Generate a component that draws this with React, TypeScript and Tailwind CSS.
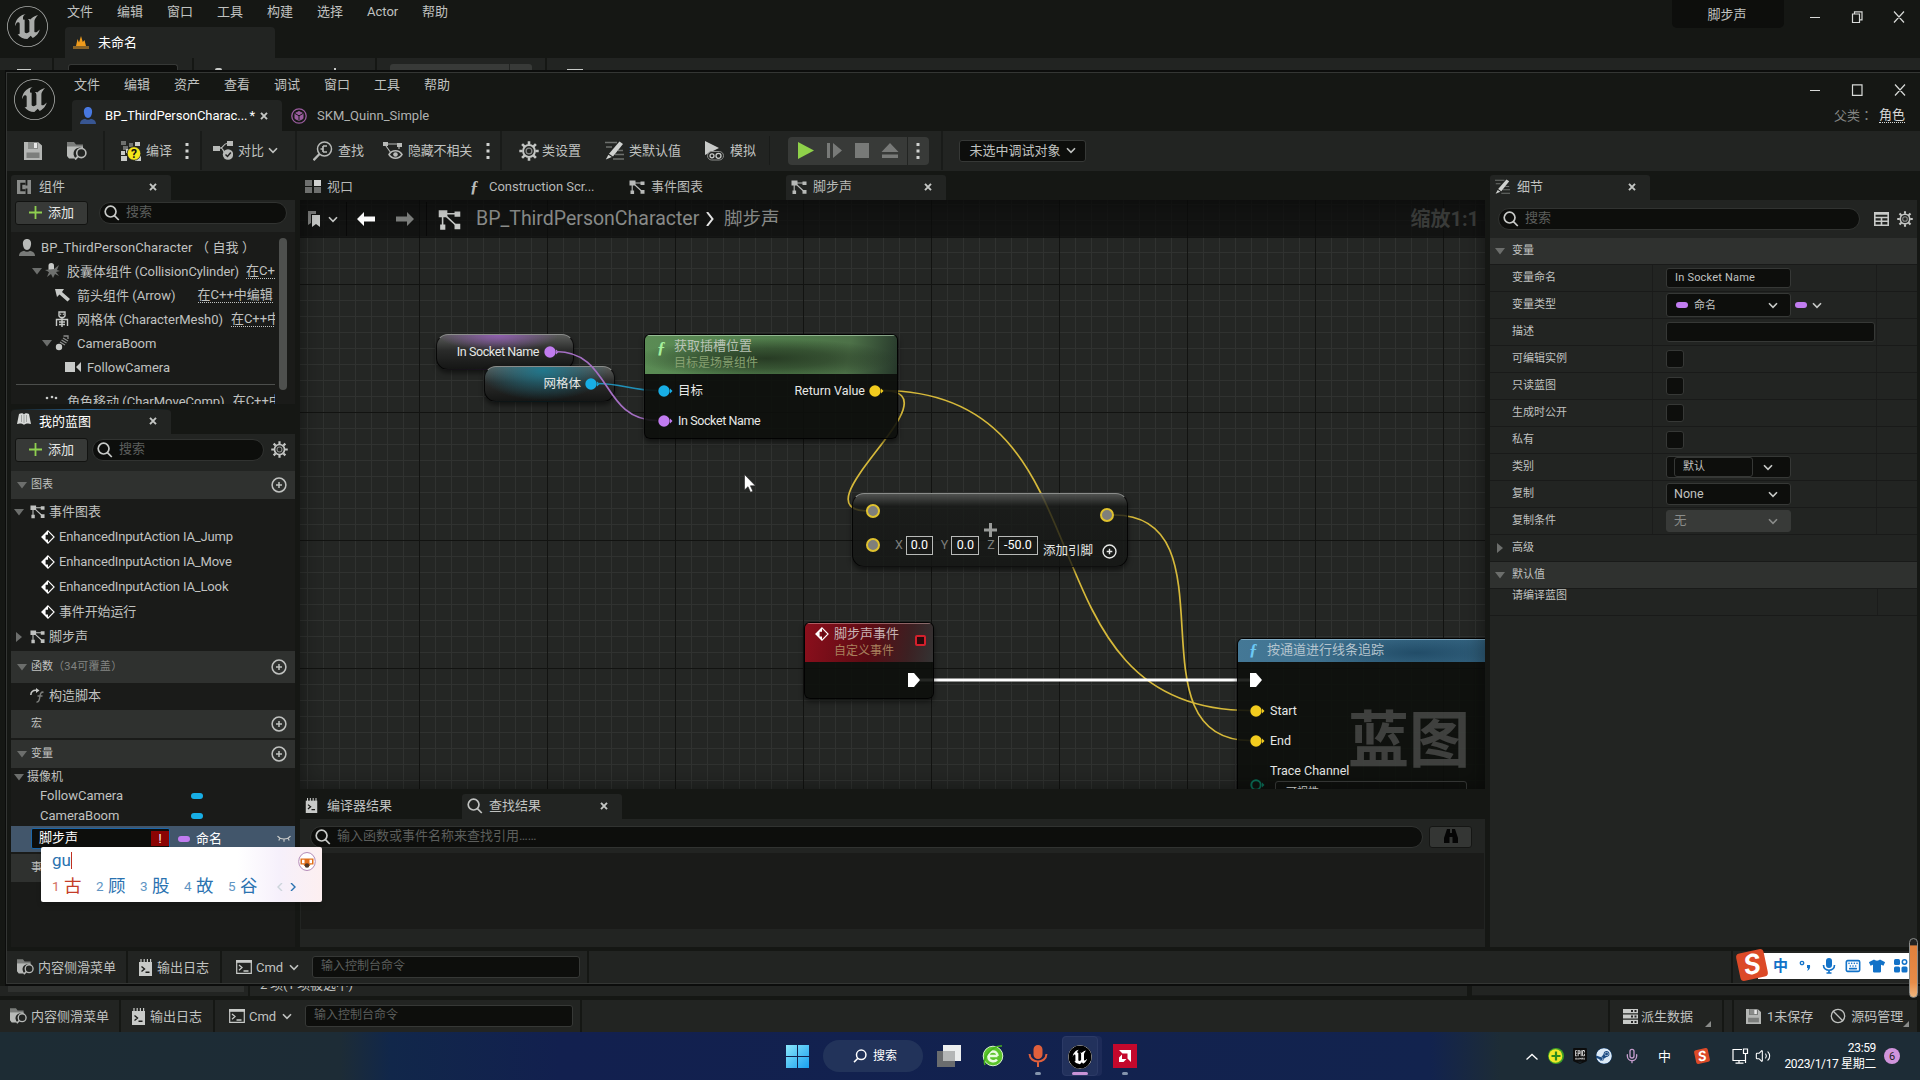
import type { ReactNode } from 'react';
import clsx from 'clsx';
import { SiEpicgames, SiUnrealengine } from 'react-icons/si';
import { FaSteam, FaTshirt } from 'react-icons/fa';
import { Ban, Keyboard, Mic, Volume2 } from 'lucide-react';

interface IIcon {
  className?: string;
}

interface ITreeRow {
  pad: string;
  arrow?: boolean;
  icon: ReactNode;
  label: string;
  link?: string;
  linkGap?: string;
  tracking?: string;
}

const Chevron = ({ className }: IIcon) => (
  <svg viewBox="0 0 10 7" fill="none" stroke="currentColor" strokeWidth="1.6" className={clsx('h-[7px] w-[10px] shrink-0', className)}>
    <path d="M1 1.2 5 5.4 9 1.2" />
  </svg>
);

const SearchIcon = ({ className }: IIcon) => (
  <svg viewBox="0 0 16 16" fill="none" stroke="currentColor" strokeWidth="1.7" className={clsx('size-4 shrink-0', className)}>
    <circle cx="6.6" cy="6.6" r="5.4" />
    <path d="m10.4 10.6 4.4 4.4" />
  </svg>
);

const CloseX = ({ className }: IIcon) => (
  <svg viewBox="0 0 8 8" stroke="#c4c6c4" strokeWidth="1.9" className={clsx('size-2 shrink-0', className)}>
    <path d="m1 .8 6 6.4M7 .8 1 7.2" />
  </svg>
);

const Gear = ({ className }: IIcon) => (
  <svg viewBox="0 0 20 20" fill="none" stroke="#c4c6c4" className={clsx('size-5 shrink-0', className)}>
    <circle cx="10" cy="10" r="5.9" strokeWidth="2" />
    <circle cx="10" cy="10" r="2.9" stroke="#8a8c8a" strokeWidth="1.3" />
    <path d="M10 .3v3.2M10 16.500v3.200M.3 10h3.200M16.500 10h3.200M3.100 3.100l2.300 2.300M14.600 14.600l2.300 2.300M16.900 3.100l-2.300 2.300M5.400 14.600l-2.300 2.300" strokeWidth="2.6" />
  </svg>
);

const Triangle = ({ right, className }: { right?: boolean; className?: string }) => (
  <svg viewBox="0 0 10 10" fill="#6c6e6c" className={clsx('size-[10px] shrink-0', className)}>
    {right ? <path d="M2 0v10l6-5z" /> : <path d="M0 2h10L5 8.4z" />}
  </svg>
);

const PlusCircle = ({ className }: IIcon) => (
  <svg viewBox="0 0 16 16" fill="none" stroke="currentColor" strokeWidth="1.5" className={clsx('size-4 shrink-0', className)}>
    <circle cx="8" cy="8" r="6.9" />
    <path d="M8 5v6M5 8h6" />
  </svg>
);

const GraphIcon = ({ className }: IIcon) => (
  <svg viewBox="0 0 16 16" fill="currentColor" className={clsx('size-4 shrink-0', className)}>
    <path d="M.5 1.5h6v5h-6zM11.5 2.5h4v3.6h-4zM1.5 11.5h3.6v3.6H1.5zM11.5 11h4v3.8h-4z" />
    <path d="M6 4h6M3.2 6v6M6 6l6.5 6" stroke="currentColor" strokeWidth="1.1" />
  </svg>
);

const DiamondIcon = ({ className }: IIcon) => (
  <svg viewBox="0 0 14 14" className={clsx('size-[14px] shrink-0', className)}>
    <path d="M7 .9 13.1 7 7 13.1.9 7z" fill="none" stroke="#fff" strokeWidth="1.1" />
    <path d="M7 .5.5 7 7 13.5V9.6H4.6V4.8H7z" fill="#fff" />
    <path d="M7.2 4 10.4 7 7.2 10z" fill="currentColor" />
  </svg>
);

const SaveIcon = ({ className }: IIcon) => (
  <svg viewBox="0 0 18 18" className={clsx('size-[18px] shrink-0', className)}>
    <path d="M0 0h4v7h10V0l4 3.500V18H0z" fill="#b4b6b4" />
    <path d="M4 0h10v7H4z" fill="#8a8c8a" />
    <path d="M10 1h3v5h-3z" fill="#e8e8e8" />
    <path d="M2.500 10.500h13V16h-13z" fill="#7c7e7c" />
  </svg>
);

const BrowseIcon = ({ className }: IIcon) => (
  <svg viewBox="0 0 20 18" className={clsx('h-[18px] w-5 shrink-0', className)}>
    <path d="M0 0h7l2 2.500h7V5H0z" fill="#7a7c7a" />
    <path d="M0 4.500h16v2.200a6 6 0 0 0-7 9.800H2L0 14z" fill="#b8bab8" />
    <circle cx="14.300" cy="11" r="4.600" fill="none" stroke="#b8bab8" strokeWidth="1.600" />
    <path d="m11 14.300-3 3.200" stroke="#b8bab8" strokeWidth="1.900" />
  </svg>
);

const LogIcon = ({ className }: IIcon) => (
  <svg viewBox="0 0 13 17" className={clsx('h-[17px] w-[13px] shrink-0', className)}>
    <path d="M0 3h13v14H0z" fill="#c8cac8" />
    <path d="M2 0v4M5.200 0v4M8.400 0v4M11.600 0v4" stroke="#c8cac8" strokeWidth="1.200" />
    <path d="m2.500 7.500 3 2.500-3 2.500M6.500 13.200h4" fill="none" stroke="#1a1b19" strokeWidth="1.400" />
  </svg>
);

const CmdIcon = () => (
  <svg viewBox="0 0 16 14" fill="none" stroke="#c8cac8" className="h-[14px] w-4 shrink-0">
    <path d="M.7.7h14.600v12.600H.7z" strokeWidth="1.200" />
    <path d="M0 1.500h16" strokeWidth="2.600" />
    <path d="m3 5 3 2.600L3 10.200M7.500 11h5" strokeWidth="1.300" />
  </svg>
);

const PencilLines = ({ className }: IIcon) => (
  <svg viewBox="0 0 19 19" className={clsx('size-[19px] shrink-0', className)}>
    <path d="M0 1.500h12M1 6h6M10 13.500h9M8 18h11M13 9.500h5" stroke="#6e706e" strokeWidth="1.300" />
    <path d="M14.500.5 18 3 8 15.500 4 12.800z" fill="#d0d2d0" />
    <path d="M3.400 13.800 6.800 16 .8 18.600z" fill="#d0d2d0" />
  </svg>
);

const PersonIcon = ({ className }: IIcon) => (
  <svg viewBox="0 0 16 17" fill="currentColor" className={clsx('h-[17px] w-4 shrink-0', className)}>
    <path d="M8 0c3 0 4.300 2.200 4.100 5-.2 3-1.600 6-4.100 6S4.100 8 3.900 5C3.700 2.200 5 0 8 0z" />
    <path d="M0 17c0-3 1.800-4.600 5-5.200 1.500 1.300 4.500 1.300 6 0 3.200.6 5 2.200 5 5.200z" opacity=".6" />
  </svg>
);

const Dots = ({ className }: IIcon) => (
  <svg viewBox="0 0 4 16" fill="#d0d2d0" className={clsx('h-4 w-1 shrink-0', className)}>
    <path d="M.5 0h3v3h-3zM.5 6.500h3v3h-3zM.5 13h3v3h-3z" />
  </svg>
);

const UnrealLogo = () => <SiUnrealengine className="size-[41px] shrink-0 text-[#a9aba9]" />;

const Menu = ({ items, className }: { items: string[]; className?: string }) => (
  <div className={clsx('flex items-center text-[13px] leading-none', className)}>
    {items.map((item) => (
      <span key={item} className={clsx('whitespace-nowrap', item === 'Actor' ? 'w-[55px]' : 'w-[50px]')}>
        {item}
      </span>
    ))}
  </div>
);

const SearchBox = ({ className, text = '搜索' }: { className?: string; text?: string }) => (
  <div className={clsx('flex h-[22px] shrink-0 items-center gap-[6px] rounded-full border border-[#313331] bg-[#0d0e0c] pl-1 text-[13px] leading-none text-[#5c5e5c]', className)}>
    <SearchIcon className="text-[#c8cac8]" />
    <span className="pb-[3px]">{text}</span>
  </div>
);

const AddButton = () => (
  <button className="flex h-6 w-[73px] shrink-0 items-center justify-center gap-1.5 rounded-[3px] border border-[#121311] bg-[#373937] pb-px text-[13px] leading-none text-[#e4e6e4]">
    <svg viewBox="0 0 13 13" className="size-[13px]" stroke="#8fd050" strokeWidth="1.8">
      <path d="M6.500 0v13M0 6.500h13" />
    </svg>
    添加
  </button>
);

const PanelTab = ({ icon, label, active, className }: { icon: ReactNode; label: string; active?: boolean; className?: string }) => (
  <div className={clsx('flex h-[25px] w-40 shrink-0 items-center rounded-t-[3px] pb-0.5 pl-[6px] text-[13px] leading-none', active && 'bg-[#222422]', className)}>
    <span className="flex w-[22px] shrink-0 items-center">{icon}</span>
    <span className="flex-1 whitespace-nowrap">{label}</span>
    {active && <CloseX className="mr-[14px]" />}
  </div>
);

const Func = ({ className }: IIcon) => <span className={clsx("font-['Liberation_Serif'] text-[17px] leading-none font-bold italic", className)}>ƒ</span>;

const ComponentRow = ({ pad, arrow, icon, label, link, linkGap, tracking }: ITreeRow) => (
  <div className={clsx('flex h-6 items-center whitespace-nowrap', pad)}>
    {arrow && <Triangle className="mr-[3px]" />}
    <span className="flex w-[22px] shrink-0 items-center">{icon}</span>
    <span className={tracking}>{label}</span>
    {link && <span className={clsx('border-b border-dotted border-[#c0c2c0] pb-px', linkGap)}>{link}</span>}
  </div>
);

const Section = ({ label, extra, arrow = true, className }: { label: string; extra?: string; arrow?: boolean; className?: string }) => (
  <div className={clsx('flex shrink-0 items-center bg-[#2f312f] pr-2 pl-[6px] text-[11px] leading-none', className)}>
    <span className="w-[14px]">{arrow && <Triangle />}</span>
    <span className="pb-0.5">{label}</span>
    {extra && <span className="pb-0.5 tracking-[0.3px] text-[#828482]">{extra}</span>}
    <PlusCircle className="ml-auto text-[#c0c2c0]" />
  </div>
);

const ComponentsPanel = () => (
  <div className="flex h-[229px] shrink-0 flex-col">
    <PanelTab
      active
      label="组件"
      icon={
        <svg viewBox="0 0 14 14" className="size-[14px]">
          <path d="M0 0h14v14H0z" fill="#8a8c8a" />
          <path d="M8.500 3.800H4.300v6.400h4.200" fill="none" stroke="#1b1c1a" strokeWidth="2" />
          <path d="M9.500 0v5.500M9.500 8.500V14" stroke="#1b1c1a" strokeWidth="1.800" />
        </svg>
      }
    />
    <div className="flex h-8 shrink-0 items-start bg-[#222422] pt-px pl-1">
      <AddButton />
      <SearchBox className="mt-px ml-[11px] w-[188px]" />
    </div>
    <div className="flex min-h-0 flex-1 overflow-hidden bg-[#1a1b19] text-[13px] leading-none">
      <div className="w-[264px] overflow-hidden pt-[3px]">
        <ComponentRow pad="pl-2" icon={<PersonIcon className="text-[#b8bab8]" />} label="BP_ThirdPersonCharacter （ 自我 ）" tracking="tracking-[0.120px]" />
        <ComponentRow
          pad="pl-[21px]"
          arrow
          icon={
            <svg viewBox="0 0 16 16" className="size-4">
              <rect x="3.500" y="0" width="5.500" height="10" rx="2.700" fill="#c8cac8" />
              <path d="m9 6 5-4-2 5 3 1-4 1 3 4-4-2-2 4-2-4-4 3 2-5-4-2 4-.5z" fill="#6e706e" />
            </svg>
          }
          label="胶囊体组件 (CollisionCylinder)"
          link="在C++中编辑"
          linkGap="ml-[7px]"
          tracking="tracking-[-0.070px]"
        />
        <ComponentRow
          pad="pl-[44px]"
          icon={
            <svg viewBox="0 0 16 14" className="h-[14px] w-4" fill="#c8cac8">
              <path d="M0 1h9L7 4l8 7-2.500 2.500-8-7L2 9z" />
            </svg>
          }
          label="箭头组件 (Arrow)"
          link="在C++中编辑"
          linkGap="ml-[22px]"
        />
        <ComponentRow
          pad="pl-[44px]"
          icon={
            <svg viewBox="0 0 14 16" className="h-4 w-[14px]" fill="none" stroke="#c8cac8" strokeWidth="1.400">
              <path d="M4 1h6v4l-1.500 1.500h-3L4 5zM7 7v9M1.500 15V8.500h11V15M4 11h6M4 13.500h6" />
              <path d="M5.200 3.200h1M7.800 3.200h1" />
            </svg>
          }
          label="网格体 (CharacterMesh0)"
          link="在C++中编辑"
          linkGap="ml-[8px]"
          tracking="tracking-[-0.050px]"
        />
        <ComponentRow
          pad="pl-[31px]"
          arrow
          icon={
            <svg viewBox="0 0 14 16" className="h-4 w-[14px]" fill="none" stroke="#8a8c8a" strokeWidth="1.300">
              <circle cx="4" cy="12" r="3.200" fill="#c8cac8" stroke="none" />
              <path d="m5 7 5 3M6.500 5l5 3M8 3l5 3M8.500 1h4.500v3" />
            </svg>
          }
          label="CameraBoom"
        />
        <ComponentRow
          pad="pl-[54px]"
          icon={
            <svg viewBox="0 0 16 10" className="h-[10px] w-4" fill="#c8cac8">
              <path d="M0 0h10v10H0zM16 0v10l-5-5z" />
            </svg>
          }
          label="FollowCamera"
        />
        <div className="mt-[5px] ml-[5px] h-px bg-[#4c4e4c]" />
        <ComponentRow
          pad="pl-[34px] mt-[4px]"
          icon={
            <svg viewBox="0 0 14 8" className="mb-1 h-2 w-[14px]" fill="#c8cac8">
              <circle cx="2" cy="3" r="1.300" />
              <circle cx="7" cy="2" r="1.300" />
              <circle cx="11" cy="3" r="1.300" />
            </svg>
          }
          label="角色移动 (CharMoveComp)"
          link="在C++中编辑"
          linkGap="ml-2"
        />
      </div>
      <div className="mt-[6px] ml-1 h-[152px] w-2 rounded-full bg-[#4e504e]" />
    </div>
  </div>
);

const EVENTS = ['EnhancedInputAction IA_Jump', 'EnhancedInputAction IA_Move', 'EnhancedInputAction IA_Look', '事件开始运行'];

const BlueprintPanel = () => (
  <div className="mt-[5px] flex min-h-0 flex-1 flex-col">
    <div className="h-px w-40 bg-gradient-to-r from-transparent via-[#2d6ca0] to-transparent" />
    <PanelTab
      active
      label="我的蓝图"
      className="!h-6 text-white"
      icon={
        <svg viewBox="0 0 14 13" className="mb-1 h-[13px] w-[14px]" fill="#d8dad8">
          <path d="M2 1c2-1 4-1 5 .5C8 0 10 0 12 1l2 10c-3-1-5-.5-7 .8C5 10.500 3 10 0 11z" />
          <path d="M7 2v8M4.500 2v7M9.500 2v7" stroke="#8a8c8a" strokeWidth=".7" />
        </svg>
      }
    />
    <div className="flex h-[37px] shrink-0 items-start bg-[#222422] pt-[4px] pl-1">
      <AddButton />
      <SearchBox className="mt-px ml-1 w-[172px]" />
      <Gear className="mt-[3px] ml-[7px] !size-[17px]" />
    </div>
    <div className="flex min-h-0 flex-1 flex-col bg-[#1a1b19] text-[13px] leading-none">
      <Section label="图表" className="h-7" />
      <div className="flex h-[25px] shrink-0 items-center pl-[3px] text-[#c0c2c0]">
        <Triangle className="mr-[6px]" />
        <GraphIcon className="mr-1 !size-[15px]" />
        事件图表
      </div>
      {EVENTS.map((name) => (
        <div key={name} className="flex h-[25px] shrink-0 items-center gap-1 pl-[30px] tracking-[-0.150px]">
          <DiamondIcon className="text-[#1a1b19]" />
          {name}
        </div>
      ))}
      <div className="flex h-[27px] shrink-0 items-center pb-0.5 pl-[3px]">
        <Triangle right className="mr-[6px]" />
        <GraphIcon className="mr-1 !size-[15px]" />
        脚步声
      </div>
      <Section label="函数" extra="（34可覆盖）" className="h-8" />
      <div className="flex h-[27px] shrink-0 items-center pb-0.5 pl-[19px]">
        <svg viewBox="0 0 15 16" className="mr-1 h-4 w-[15px]" fill="none">
          <path d="M.8 7C1 3.500 3 2 6.500 2.200" stroke="#c8cac8" strokeWidth="1.500" />
          <path d="m6 0 3.500 2.400L6 5z" fill="#c8cac8" />
          <path d="M13.500 4.500c-2-1.200-3 .5-3.500 3.500-.6 4-1.200 6.500-3.500 6M7.500 8h5" stroke="#7c7e7c" strokeWidth="1.500" />
        </svg>
        构造脚本
      </div>
      <Section label="宏" arrow={false} className="h-7" />
      <Section label="变量" className="mt-0.5 h-7" />
      <div className="flex h-[18px] shrink-0 items-center pl-[3px] text-[12px]">
        <Triangle className="mr-[3px]" />
        摄像机
      </div>
      {['FollowCamera', 'CameraBoom'].map((name) => (
        <div key={name} className="flex h-5 shrink-0 items-center pb-px pl-[29px]">
          <span className="w-[151px]">{name}</span>
          <span className="h-[6px] w-3 rounded-full bg-[#18aee5]" />
        </div>
      ))}
      <div className="flex h-[26px] shrink-0 items-center bg-[#42566b] pr-1 pb-px pl-5 text-white">
        <div className="flex h-[21px] w-[139px] items-center rounded-[2px] border border-[#1b66a8] bg-[#0d0e0c] pl-[7px]">
          <span className="pb-0.5">脚步声</span>
          <span className="ml-auto flex h-[15px] w-[18px] items-center justify-center bg-[#8b0404] text-[12px]">!</span>
        </div>
        <span className="ml-2 h-[6px] w-3 rounded-full bg-[#c17cf0]" />
        <span className="ml-[6px]">命名</span>
        <svg viewBox="0 0 14 7" className="ml-auto h-[7px] w-[14px]" fill="none" stroke="#c8cac8" strokeWidth="1.200">
          <path d="M.5 1c3 4 10 4 13 0M3 3 1.800 5.500M7 4v2.800M11 3l1.200 2.500" />
        </svg>
      </div>
      <div className="mt-0.5 flex h-7 shrink-0 items-center bg-[#2f312f] pb-0.5 pl-5 text-[11px]">事件分发器</div>
    </div>
  </div>
);

const Pin = ({ color, className }: { color: string; className?: string }) => (
  <svg viewBox="0 0 15 12" fill={color} className={clsx('h-3 w-[15px] shrink-0', className)}>
    <circle cx="6" cy="6" r="5.700" />
    <path d="M12 3.500 14.500 6 12 8.500z" />
  </svg>
);

const HollowPin = ({ className }: IIcon) => <span className={clsx('size-[14px] rounded-full border-2 border-[#e0c22e] bg-[#7f7f7b]', className)} />;

const ExecPin = ({ className }: IIcon) => (
  <svg viewBox="0 0 12 14" fill="#fff" className={clsx('h-[14px] w-3 shrink-0', className)}>
    <path d="M0 0h6l6 7-6 7H0z" />
  </svg>
);

const VectorField = ({ axis, value, className }: { axis: string; value: string; className?: string }) => (
  <span className="flex items-center gap-[3px] text-[#7c7e7c]">
    {axis}
    <span className={clsx('flex h-[19px] items-center justify-center border border-[#b8bab8] text-white', className)}>{value}</span>
  </span>
);

const Wires = () => (
  <svg className="absolute inset-0" width="1185" height="589" viewBox="300 200 1185 589" fill="none" strokeWidth="1.700">
    <path d="M882 390.500C1119 390.500 1013 710.500 1250 710.500" stroke="#d6b93a" />
    <path d="M882 390.500C963 390.500 791 511 869 511" stroke="#d6b93a" />
    <path d="M1114 515C1237 515 1127 740.500 1250 740.500" stroke="#d6b93a" />
    <path d="M597 383.500C622 383.500 632 390.500 657 390.500" stroke="#2090b8" />
    <path d="M556 351.500C612 351.500 601 420.500 657 420.500" stroke="#a56fc4" />
    <path d="M915 680H1250" stroke="#fff" strokeWidth="3" />
  </svg>
);

const NODE = 'absolute overflow-hidden border border-black/80 shadow-[0_3px_5px_rgba(0,0,0,0.5)] text-[12.500px] leading-none text-[#e6e8e6] whitespace-nowrap';

const Graph = () => (
  <div className="relative h-[589px] overflow-hidden bg-[#242624]">
    <svg className="absolute inset-0" width="1185" height="589">
      <defs>
        <pattern id="minor" width="16" height="16" x="7" y="4" patternUnits="userSpaceOnUse">
          <path d="M.5 0v16M0 .5h16" stroke="#303230" />
        </pattern>
        <pattern id="major" width="128" height="128" x="119" y="84" patternUnits="userSpaceOnUse">
          <path d="M.5 0v128M0 .5h128" stroke="#121311" />
        </pattern>
      </defs>
      <rect width="1185" height="589" fill="url(#minor)" />
      <rect width="1185" height="589" fill="url(#major)" />
    </svg>

    <div className={clsx(NODE, 'top-[134px] left-[136px] flex h-9 w-[138px] items-center justify-end rounded-[12px] border-t-[#8a8c8a] bg-[radial-gradient(ellipse_60px_16px_at_45%_0%,rgba(150,95,185,0.9),transparent),linear-gradient(#5a5c5a,#2a2b2a_45%,#151615)] pr-[14px]')}>
      <span className="mr-[5px] tracking-[-0.400px]">In Socket Name</span>
      <Pin color="#c17cf0" />
    </div>
    <div className={clsx(NODE, 'top-[166px] left-[184px] flex h-9 w-[131px] items-center justify-end rounded-[12px] border-t-[#8a8c8a] bg-[radial-gradient(ellipse_65px_30px_at_45%_10%,rgba(25,125,150,0.85),transparent),linear-gradient(#5a5c5a,#2a2b2a_45%,#151615)] pr-[14px]')}>
      <span className="mr-1">网格体</span>
      <Pin color="#18aee5" />
    </div>
    <Wires />

    <div className={clsx(NODE, 'top-[134px] left-[344px] h-[105px] w-[254px] rounded-[6px] bg-[#0d100c]/90')}>
      <div className="flex h-[39px] bg-[radial-gradient(ellipse_130px_20px_at_48%_60%,rgba(29,43,26,0.8),rgba(29,43,26,0.5)_50%,transparent),linear-gradient(100deg,#5b8c55,#4f7a4a_60%,#4d7148_80%,#26372a)] pt-1 pl-3 shadow-[inset_0_1px_0_rgba(190,220,190,0.6)]">
        <Func className="w-[17px] text-[#a5f09c]" />
        <div className="flex flex-col gap-[5px] text-[#b9c4b6]">
          <span className="text-[13px]">获取插槽位置</span>
          <span className="text-[12px] text-[#86a070]">目标是场景组件</span>
        </div>
      </div>
      <div className="flex h-[34px] items-center pr-[13px] pl-[13px]">
        <Pin color="#18aee5" />
        <span className="ml-[5px]">目标</span>
        <span className="mr-1 ml-auto">Return Value</span>
        <Pin color="#f2cc1e" />
      </div>
      <div className="flex h-[26px] items-center pl-[13px]">
        <Pin color="#c17cf0" />
        <span className="ml-[5px] tracking-[-0.400px]">In Socket Name</span>
      </div>
    </div>

    <div className={clsx(NODE, 'top-[293px] left-[552px] h-[74px] w-[276px] rounded-[12px] border-t-[#8a8c8a] bg-[linear-gradient(rgba(85,87,85,0.9),rgba(24,26,24,0.800)_17%,rgba(20,22,20,0.800))]')}>
      <div className="flex h-[34px] items-center justify-between pr-[13px] pl-[13px]">
        <HollowPin />
        <HollowPin className="mt-2" />
      </div>
      <div className="flex h-[34px] items-center pr-[10px] pl-[13px]">
        <HollowPin />
        <div className="ml-[15px] flex gap-[8px]">
          <VectorField axis="X" value="0.0" className="w-[27px]" />
          <VectorField axis="Y" value="0.0" className="w-[28px]" />
          <VectorField axis="Z" value="-50.0" className="w-[40px]" />
        </div>
        <span className="mt-3 ml-auto">添加引脚</span>
        <PlusCircle className="mt-3 ml-[9px] !size-[15px]" />
      </div>
      <svg viewBox="0 0 13 14" className="absolute top-[29px] left-[131px] h-[14px] w-[13px]" stroke="#9a9c9a" strokeWidth="3">
        <path d="M6.500 0v14M0 7h13" />
      </svg>
    </div>

    <div className={clsx(NODE, 'top-[422px] left-[504px] h-[77px] w-[130px] rounded-[6px] bg-[#0d100c]/90')}>
      <div className="flex h-[39px] bg-[linear-gradient(100deg,#8c0f1c,#5c0c14_50%,#3c2022_80%,#333)] pt-1 pl-[10px] shadow-[inset_0_1px_0_rgba(220,170,170,0.5)]">
        <DiamondIcon className="text-[#5c0c14]" />
        <div className="ml-[5px] flex flex-col gap-[5px]">
          <span className="text-[13px] text-[#c8b4b4]">脚步声事件</span>
          <span className="text-[12px] text-[#a8805c]">自定义事件</span>
        </div>
        <span className="mt-[8px] ml-4 size-[11px] rounded-[2px] border-2 border-[#d4202c] bg-[#2a0a0c]" />
      </div>
      <ExecPin className="mt-[11px] ml-[103px]" />
    </div>

    <div className={clsx(NODE, 'top-[438px] left-[937px] h-[200px] w-[300px] rounded-[6px] bg-[#0d100c]/90')}>
      <div className="flex h-[23px] items-center bg-[radial-gradient(ellipse_110px_20px_at_60%_60%,rgba(28,69,96,0.8),transparent),linear-gradient(100deg,#447896,#33627e)] pb-[3px] pl-[11px] shadow-[inset_0_1px_0_rgba(170,205,225,0.6)]">
        <Func className="w-[18px] text-[#6cc8f4]" />
        <span className="text-[13px] text-[#b4c4ce]">按通道进行线条追踪</span>
      </div>
      <ExecPin className="mt-[11px] ml-3" />
      <div className="mt-[9px] flex h-[30px] items-center pl-3">
        <Pin color="#f2cc1e" />
        <span className="ml-[5px]">Start</span>
      </div>
      <div className="flex h-[30px] items-center pl-3">
        <Pin color="#f2cc1e" />
        <span className="ml-[5px]">End</span>
      </div>
      <div className="mt-[9px] pl-8">Trace Channel</div>
      <div className="flex items-start pl-3">
        <svg viewBox="0 0 15 12" className="mt-px h-3 w-[15px]">
          <circle cx="6" cy="6" r="4.700" fill="none" stroke="#0b6e57" strokeWidth="2" />
          <path d="M12 3.500 14.500 6 12 8.500z" fill="#0b6e57" />
        </svg>
        <div className="mt-[3px] ml-[10px] h-6 w-[192px] rounded-[3px] border border-[#3a3c3a] pt-[5px] pl-[10px] text-[11px]">可视性</div>
      </div>
    </div>
    <span className="absolute top-[511px] left-[1048px] text-[61px] leading-none font-bold text-white/20">蓝图</span>

    <div className="absolute inset-x-0 top-0 flex h-[38px] items-center bg-[#0c0d0c]/75 pl-2 text-[19.500px] leading-none text-[#8a8c8a]">
      <svg viewBox="0 0 12 16" className="h-4 w-3" fill="#c8cac8">
        <path d="M0 0h8v3H3v9l-3 2z" opacity=".6" />
        <path d="M4 4h8v12l-4-3-4 3z" />
      </svg>
      <Chevron className="ml-2 text-[#c8cac8]" />
      <span className="ml-[8px] h-[34px] w-px bg-black/50" />
      <svg viewBox="0 0 18 14" className="ml-[10px] h-[14px] w-[18px]" fill="#fff">
        <path d="M7 0v4.500h11v5H7V14L0 7z" />
      </svg>
      <svg viewBox="0 0 18 14" className="ml-[21px] h-[14px] w-[18px]" fill="#7c7e7c">
        <path d="M11 0v4.500H0v5h11V14l7-7z" />
      </svg>
      <span className="ml-[12px] h-[34px] w-px bg-black/50" />
      <GraphIcon className="ml-[11px] !size-[23px] text-[#c8cac8]" />
      <span className="ml-[15px] w-[221px] whitespace-nowrap">BP_ThirdPersonCharacter</span>
      <svg viewBox="0 0 8 14" className="ml-[9px] h-[14px] w-2" fill="none" stroke="#e8e8e8" strokeWidth="2">
        <path d="m1 0 5.500 7L1 14" />
      </svg>
      <span className="ml-[10px] text-[18.500px]">脚步声</span>
      <span className="mr-[6px] ml-auto text-[20px] font-bold text-[#3a3c3a]">缩放1:1</span>
    </div>
    <div className="pointer-events-none absolute inset-0 shadow-[inset_0_0_22px_rgba(0,0,0,0.450)]" />
    <svg viewBox="0 0 12 19" className="absolute top-[274px] left-[444px] h-[19px] w-3" fill="#fff" stroke="#222" strokeWidth=".6">
      <path d="M.5.5v15.500l3.500-3.300 2.500 5.600 2.400-1-2.500-5.500h5z" />
    </svg>
  </div>
);

const ResultsPanel = () => (
  <div className="flex min-h-0 flex-1 flex-col pt-[5px]">
    <div className="flex">
      <PanelTab className="mr-[2px] !pl-[5px]" icon={<LogIcon className="!h-[15px]" />} label="编译器结果" />
      <PanelTab active className="!pl-[5px]" icon={<SearchIcon />} label="查找结果" />
    </div>
    <div className="flex flex-1 flex-col bg-[#222422]">
      <div className="flex items-center pt-[7px] pl-[10px]">
        <SearchBox className="w-[1113px]" text="输入函数或事件名称来查找引用……" />
        <button className="ml-[6px] flex h-[22px] w-[43px] items-center justify-center rounded-[3px] border border-[#151614] bg-[#343634] pb-0.5">
          <svg viewBox="0 0 14 14" className="size-[14px]" fill="#050505">
            <path d="M3 0h3v4h2V0h3l3 9v5H8.500V8h-3v6H0V9z" />
          </svg>
        </button>
      </div>
      <div className="mx-px mt-[5px] h-[76px] bg-[#1a1b19]" />
    </div>
  </div>
);

const Field = ({ children, className }: { children?: ReactNode; className?: string }) => (
  <div className={clsx('flex items-center rounded-[3px] border border-[#363836] bg-[#0d0e0c]', className)}>{children}</div>
);

const DetailRow = ({ label, children }: { label: string; children: ReactNode }) => (
  <div className="flex h-[27px] shrink-0 border-b border-[#191a19]">
    <span className="flex w-[163px] items-center border-r border-[#1b1c1b] pb-0.5 pl-[22px]">{label}</span>
    <div className="flex w-[224px] items-center border-r border-[#1b1c1b] pl-[13px]">{children}</div>
  </div>
);

const DetailsPanel = () => (
  <div className="ml-[5px] flex w-[427px] shrink-0 flex-col">
    <PanelTab active icon={<PencilLines className="!size-[15px]" />} label="细节" className="!pl-[5px]" />
    <div className="flex flex-1 flex-col bg-[#222422] text-[11px] leading-none">
      <div className="flex h-[38px] shrink-0 items-center pb-px pl-[8px]">
        <SearchBox className="w-[362px]" />
        <svg viewBox="0 0 15 14" className="ml-[14px] h-[14px] w-[15px]" fill="none" stroke="#c8cac8" strokeWidth="1.600">
          <path d="M.8.8h13.400v12.400H.8zM0 2h15M0 5.500h15M0 9.300h15M7.500 5v9" />
        </svg>
        <Gear className="ml-2 !size-4" />
      </div>
      <div className="flex h-[27px] shrink-0 items-center border-b border-[#191a19] bg-[#2f312f] pb-px pl-[5px]">
        <Triangle className="mr-[7px]" />
        变量
      </div>
      <DetailRow label="变量命名">
        <Field className="h-5 w-[125px] pb-0.5 pl-2 tracking-[0.200px]">In Socket Name</Field>
      </DetailRow>
      <DetailRow label="变量类型">
        <Field className="h-6 w-[125px] pr-3 pl-[9px]">
          <span className="mr-[6px] h-[6px] w-3 rounded-full bg-[#c17cf0]" />
          命名
          <Chevron className="ml-auto text-[#c8cac8]" />
        </Field>
        <span className="mr-[5px] ml-1 h-[6px] w-3 rounded-full bg-[#c17cf0]" />
        <Chevron className="text-[#c8cac8]" />
      </DetailRow>
      <DetailRow label="描述">
        <Field className="h-5 w-[209px]" />
      </DetailRow>
      {['可编辑实例', '只读蓝图', '生成时公开', '私有'].map((label) => (
        <DetailRow key={label} label={label}>
          <Field className="size-[18px]" />
        </DetailRow>
      ))}
      <DetailRow label="类别">
        <Field className="h-[22px] w-[125px] pr-[17px] pl-[7px]">
          <Field className="h-5 w-[79px] pb-0.5 pl-2">默认</Field>
          <Chevron className="ml-auto text-[#c8cac8]" />
        </Field>
      </DetailRow>
      <DetailRow label="复制">
        <Field className="h-[22px] w-[125px] pr-3 pl-[7px] text-[12.500px]">
          None
          <Chevron className="ml-auto text-[#c8cac8]" />
        </Field>
      </DetailRow>
      <DetailRow label="复制条件">
        <Field className="h-[22px] w-[125px] !border-[#383a38] !bg-[#383a38] pr-3 pl-[7px] text-[12.500px] text-[#8a8c8a]">
          无
          <Chevron className="ml-auto" />
        </Field>
      </DetailRow>
      <div className="flex h-[27px] shrink-0 items-center border-b border-[#191a19] pb-px pl-[5px]">
        <Triangle right className="mr-[7px]" />
        高级
      </div>
      <div className="flex h-[27px] shrink-0 items-center border-b border-[#191a19] bg-[#2f312f] pb-px pl-[5px]">
        <Triangle className="mr-[7px]" />
        默认值
      </div>
      <div className="flex h-[27px] shrink-0 border-b border-[#191a19]">
        <span className="w-[388px] border-r border-[#1b1c1b] pt-[1px] pl-[22px]">请编译蓝图</span>
      </div>
    </div>
  </div>
);

const StatusLeft = () => (
  <>
    <div className="flex w-[119px] items-center pl-[10px]">
      <BrowseIcon className="!h-4 !w-[17px]" />
      <span className="ml-[4px]">内容侧滑菜单</span>
    </div>
    <div className="flex w-[94px] items-center border-l-2 border-[#151714] pl-[11px]">
      <LogIcon />
      <span className="ml-[5px]">输出日志</span>
    </div>
    <div className="flex w-[369px] items-center border-x-2 border-[#151714] pl-[14px]">
      <CmdIcon />
      <span className="mr-[7px] ml-1 w-[26px]">Cmd</span>
      <Chevron />
      <Field className="ml-[13px] h-[22px] w-[268px] pb-0.5 pl-2 text-[12px] text-[#5c5e5c]">输入控制台命令</Field>
    </div>
  </>
);

const MainToolbar = () => (
  <div className="flex h-10 shrink-0 bg-[#222422] pb-px text-[13px] leading-none">
    <div className="flex w-[96px] items-center pl-[17px]">
      <SaveIcon />
      <BrowseIcon className="ml-[25px]" />
    </div>
    <div className="flex w-[97px] items-center border-l-2 border-[#191b19] pl-[16px]">
      <svg viewBox="0 0 20 20" className="size-5">
        <path d="M0 0h5v4H0zM8 2h4v4H8zM2 5h5v4H2z" fill="#6e706e" />
        <path d="M14 1h5v4h-5zM0 10h4v4H0zM0 15h6v5H0zM5 8h5v4H5zM14 15h6v5h-6z" fill="#c8cac8" />
        <circle cx="13" cy="12.500" r="6.800" fill="#f4e61c" stroke="#222422" strokeWidth=".8" />
        <text x="13" y="17" fontSize="12" fontWeight="700" textAnchor="middle" fill="#111">?</text>
      </svg>
      <span className="ml-[5px] w-[39px]">编译</span>
      <Dots />
    </div>
    <div className="flex w-[95px] items-center border-l-2 border-[#191b19] pl-[11px]">
      <svg viewBox="0 0 20 19" className="h-[19px] w-5" fill="#b8bab8">
        <path d="M0 5h7v5H0zM14 0h6v5h-6z" />
        <path d="M7 7c4 0 3-4.500 7-4.500M7 7c3 0 3 2 4 4" fill="none" stroke="#b8bab8" strokeWidth="1.200" />
        <circle cx="15" cy="13.500" r="5.200" />
        <path d="m12.500 13.500 2 2 3.300-4" fill="none" stroke="#222" strokeWidth="1.500" />
      </svg>
      <span className="mr-[4px] ml-[5px]">对比</span>
      <Chevron />
    </div>
    <div className="flex w-[205px] items-center border-l-2 border-[#191b19] pl-[16px]">
      <svg viewBox="0 0 20 20" className="size-5" fill="none" stroke="#b8bab8" strokeWidth="1.500">
        <circle cx="11.500" cy="8" r="7" />
        <path d="m6.500 13-6 6.200" strokeWidth="2.400" />
        <path d="M7.500 8h3M10 5h4M10 11h4M10 5v6" strokeWidth="1.700" />
      </svg>
      <span className="ml-[5px] w-[45px]">查找</span>
      <svg viewBox="0 0 20 18" className="h-[18px] w-5" fill="#b8bab8">
        <path d="M0 0h5v4H0zM14 1h5v4h-5z" />
        <path d="M5 2h9M3 4l5 7M16 5v2" stroke="#b8bab8" strokeWidth="1.100" />
        <path d="M6 12.500c3-5 10-5 13 0-3 5-10 5-13 0z" fill="none" stroke="#b8bab8" strokeWidth="1.500" />
        <circle cx="12.500" cy="12.500" r="2.300" />
      </svg>
      <span className="ml-[5px] w-[78px] tracking-[-0.200px]">隐藏不相关</span>
      <Dots />
    </div>
    <div className="flex w-[269px] items-center border-l-2 border-[#191b19] pl-[17px]">
      <Gear />
      <span className="mr-[24px] ml-[3px]">类设置</span>
      <PencilLines />
      <span className="mr-[24px] ml-[5px]">类默认值</span>
      <svg viewBox="0 0 20 20" className="size-5">
        <path d="M0 0v14L14 7z" fill="#c8cac8" />
        <rect x="2.500" y="10.500" width="16" height="8.500" rx="4.200" fill="#222422" stroke="#8a8c8a" />
        <circle cx="7" cy="14.800" r="2" fill="none" stroke="#c8cac8" strokeWidth="1.300" />
        <circle cx="13.500" cy="14.800" r="2.500" fill="none" stroke="#c8cac8" strokeWidth="1.300" />
      </svg>
      <span className="ml-[5px]">模拟</span>
    </div>
    <div className="my-[5px] w-px bg-[#191b19]" />
    <div className="flex w-[171px] items-center pl-[18px]">
      <div className="flex h-7 w-[141px] items-center rounded-[4px] bg-[#383a38] pl-[10px]">
        <svg viewBox="0 0 110 17" className="h-[17px] w-[110px] shrink-0" fill="#787a78">
          <path d="M0 0v17l16-8.500z" fill="#8fd14a" />
          <path d="M29 1h3v15h-3zM35 1v15l9-7.500zM57 1h14v15H57zM92 1l-8.500 9h17zM84 12.500h16V16H84z" />
        </svg>
        <span className="mr-[8px] -ml-px h-7 w-px bg-[#222422]" />
        <Dots />
      </div>
    </div>
    <div className="flex items-center border-l-2 border-[#191b19] pl-[16px]">
      <Field className="h-[22px] w-[127px] justify-center gap-[5px]">
        未选中调试对象
        <Chevron />
      </Field>
    </div>
  </div>
);

const EditorWindow = () => (
  <div className="absolute top-[70px] left-[5px] flex h-[916px] w-[1915px] flex-col border-y-2 border-l border-[#0c0d0c]">
    <div className="flex min-h-0 flex-1 flex-col border-y border-l border-[#343634] bg-[#151714]">
      <div className="flex h-[58px] shrink-0">
        <div className="flex w-[65px] items-center pb-[5px] pl-[7px]">
          <UnrealLogo />
        </div>
        <div className="flex flex-1 flex-col justify-between">
          <Menu className="h-[22px] pl-[2px]" items={['文件', '编辑', '资产', '查看', '调试', '窗口', '工具', '帮助']} />
          <div className="flex h-[31px] items-center text-[13px] leading-none">
            <div className="flex h-[31px] w-[210px] items-center rounded-t-[4px] bg-[#222422] pl-2 text-white">
              <PersonIcon className="text-[#4878e0]" />
              <span className="ml-[9px] tracking-[-0.050px] whitespace-nowrap">BP_ThirdPersonCharac...</span>
              <span className="ml-[2px]">*</span>
              <CloseX className="ml-[5px]" />
            </div>
            <svg viewBox="0 0 16 16" className="ml-[9px] size-4" fill="none" stroke="#9a5c9e">
              <circle cx="8" cy="8" r="7.200" strokeWidth="1.300" />
              <path d="m8 3.500 4 2v5l-4 2-4-2v-5z" fill="#9a5c9e" />
              <path d="m4 5.500 4 2.300 4-2.300M8 8v4.500" stroke="#151714" />
            </svg>
            <span className="ml-[10px] text-[#b0b2b0]">SKM_Quinn_Simple</span>
          </div>
        </div>
        <div className="flex w-[130px] flex-col text-[#d8dad8]">
          <div className="flex h-[34px] items-center pl-[20px]">
            <svg viewBox="0 0 100 12" className="h-3 w-[100px]" fill="none" stroke="currentColor" strokeWidth="1.200">
              <path d="M0 6.500h10M42.500.8h9.500v10.500h-9.500zM85 .5l10 11M95 .5 85 11.500" />
            </svg>
          </div>
          <div className="flex pt-px pl-[44px] text-[13px] leading-none">
            <span className="text-[#828482]">
              父类<span className="font-['Noto_Sans_CJK_TC']">：</span>
            </span>
            <span className="ml-[6px] border-b border-dotted pb-px">角色</span>
          </div>
        </div>
      </div>
      <MainToolbar />
      <div className="flex h-[776px] shrink-0 pt-1">
        <div className="ml-1 flex w-[284px] shrink-0 flex-col">
          <ComponentsPanel />
          <BlueprintPanel />
        </div>
        <div className="ml-[5px] flex w-[1185px] shrink-0 flex-col">
          <div className="flex text-[#b8bab8]">
            <PanelTab
              className="!pl-[5px]"
              icon={
                <svg viewBox="0 0 16 13" className="h-[13px] w-4">
                  <path d="M0 0h7v6H0zM0 7h7v6H0zM9 7h7v6H9z" fill="#6e706e" />
                  <path d="M9 0h7v6H9z" fill="#d0d2d0" />
                </svg>
              }
              label="视口"
            />
            <PanelTab className="ml-[2px] !pl-[5px] tracking-[-0.030px]" icon={<Func className="pl-[3px]" />} label="Construction Scr..." />
            <PanelTab className="ml-[2px] !pl-[5px]" icon={<GraphIcon />} label="事件图表" />
            <PanelTab className="ml-[2px] !pl-[5px]" active icon={<GraphIcon />} label="脚步声" />
          </div>
          <Graph />
          <ResultsPanel />
        </div>
        <DetailsPanel />
      </div>
      <div className="mt-1 flex min-h-0 flex-1 bg-[#222422] text-[13px] leading-none">
        <StatusLeft />
        <div className="ml-[1142px] w-[2px] bg-[#151714]" />
      </div>
    </div>
  </div>
);

const SogouLogo = ({ className }: IIcon) => (
  <span className={clsx('flex -rotate-12 items-center justify-center bg-[#dc4a28] leading-none font-bold text-white italic', className)}>S</span>
);

const ImeBar = () => (
  <div className="absolute top-[953px] left-[1738px] flex h-[26px] w-[174px] items-center text-[#1272c8]">
    <SogouLogo className="relative z-10 -mt-[3px] size-7 shrink-0 rounded-[4px] text-[28px]" />
    <div className="-ml-2 flex h-[26px] flex-1 items-center bg-white pl-[15px]">
      <span className="mr-[11px] text-[15px] leading-none font-bold">中</span>
      <svg viewBox="0 0 12 12" className="mr-[11px] size-3" fill="currentColor">
        <circle cx="3" cy="3" r="1.700" fill="none" stroke="currentColor" strokeWidth="1.300" />
        <path d="M8 5h3c.5 3-.5 5-3 6 1-1.500 1-2 .8-3H8z" />
      </svg>
      <svg viewBox="0 0 14 16" className="mr-[9px] h-4 w-[14px]" fill="currentColor">
        <rect x="4" y="0" width="6" height="10" rx="3" />
        <path d="M1.500 7c0 7 11 7 11 0M7 12v2.500M4.500 15h5" fill="none" stroke="currentColor" strokeWidth="1.700" />
      </svg>
      <Keyboard className="mr-[8px] size-4" strokeWidth={2.400} />
      <FaTshirt className="mr-[9px] size-4" />
      <svg viewBox="0 0 14 14" className="size-[14px]" fill="currentColor">
        <rect width="6" height="6" rx="1.500" />
        <rect y="7.500" width="6" height="6" rx="1.500" />
        <rect x="7.500" y="7.500" width="6" height="6" rx="1.500" />
        <circle cx="10.500" cy="3" r="2.200" fill="none" stroke="currentColor" strokeWidth="1.500" />
      </svg>
    </div>
  </div>
);

const Candidates = () => (
  <div className="absolute top-[847px] left-[41px] flex h-[55px] w-[281px] flex-col rounded-[2px] bg-[linear-gradient(90deg,#fff_70%,#f6f0fb_85%,#fdeff0)] text-[#2a72b0] shadow-md">
    <div className="flex h-[27px] items-center pr-[6px] pl-[11px]">
      <span className="border-r border-[#c03020] text-[17px] leading-[17px]">gu</span>
      <svg viewBox="0 0 18 20" className="ml-auto h-5 w-[18px]">
        <ellipse cx="9" cy="10.500" rx="8.300" ry="9" fill="#fff" stroke="#b48cb8" />
        <path d="M2.500 7.500h13v6h-3l-1 1.500h-5l-1-1.500h-3z" fill="#e2701c" />
        <path d="M4 8.800h2.500v3.500H4zM11.500 8.800H14v3.500h-2.500z" fill="#fff" />
        <circle cx="9" cy="14.500" r="2.300" fill="#503828" />
      </svg>
    </div>
    <div className="flex items-center pt-[4px] pl-[11px] leading-none">
      {['古', '顾', '股', '故', '谷'].map((word, i) => (
        <span key={word} className={clsx('flex w-[44px] items-center gap-[4px]', i === 0 && 'text-[#c43c28]')}>
          <span className="w-2 text-[13.500px] opacity-75">{i + 1}</span>
          <span className="text-[17.500px]">{word}</span>
        </span>
      ))}
      <svg viewBox="0 0 20 8" className="ml-[5px] h-2 w-5" fill="none" strokeWidth="1.400">
        <path d="M5 0 1 4l4 4" stroke="#ccd4da" />
        <path d="m14 0 4 4-4 4" stroke="#2a72b0" />
      </svg>
    </div>
  </div>
);

const Taskbar = () => (
  <div className="flex h-12 shrink-0 items-center bg-[linear-gradient(90deg,#1d2c34_0px,#1d2c36_340px,#11274a_390px,#12204f_560px,#12234e_1430px,#1d2c36_1500px)] text-white">
    <svg viewBox="0 0 23 23" className="ml-[786px] size-[23px] shrink-0">
      <defs>
        <linearGradient id="win" x1="0" y1="0" x2="1" y2="1">
          <stop offset="0" stopColor="#8ae6fa" />
          <stop offset="1" stopColor="#18a0f0" />
        </linearGradient>
      </defs>
      <path d="M0 0h11v11H0zM12 0h11v11H12zM0 12h11v11H0zM12 12h11v11H12z" fill="url(#win)" />
    </svg>
    <div className="ml-[14px] flex h-8 w-[100px] shrink-0 items-center justify-center gap-1.5 rounded-full bg-[#22335a] pl-1 text-[12px] leading-none">
      <SearchIcon className="!size-[14px] -scale-x-100" />
      搜索
    </div>
    <svg viewBox="0 0 24 22" className="ml-[14px] h-[22px] w-6 shrink-0">
      <path d="M6 0h18v16H6z" fill="#eceeee" />
      <path d="M0 6h18v16H0z" fill="#6a6c6e" />
      <path d="M6 6h12v10H6z" fill="#b4b6b6" />
    </svg>
    <svg viewBox="0 0 22 24" className="ml-[21px] h-6 w-[22px] shrink-0">
      <circle cx="11" cy="12" r="9.800" fill="#5cc42c" stroke="#d8f4cc" />
      <path d="M15.500 12h-9c0-6 9-6 9 0M6.500 12.500c0 5 6 6 8.500 3" fill="none" stroke="#e8fae0" strokeWidth="2.600" />
      <path d="M3 21c-3-8 8-20 17-19" fill="none" stroke="#46b41e" strokeWidth="1.500" />
    </svg>
    <div className="ml-6 flex h-full w-5 shrink-0 flex-col items-center justify-end pb-[5px]">
      <svg viewBox="0 0 20 22" className="mb-[5px] h-[22px] w-5" fill="none" stroke="#e0603c" strokeWidth="2">
        <rect x="6.500" y="1" width="7" height="12" rx="3.500" fill="#e0603c" />
        <path d="M1.500 9c.5 10 16.500 10 17 0M10 16.500V22" />
      </svg>
      <span className="h-[3px] w-[6px] rounded-full bg-[#8494ac]" />
    </div>
    <div className="ml-[14px] flex h-10 w-10 shrink-0 items-center rounded-[4px] bg-[#1d2b58]">
      <div className="flex h-full w-9 flex-col items-center justify-end rounded-[4px] border border-[#2c3a66] bg-[#22315c]">
        <SiUnrealengine className="mb-[3px] size-6 rounded-full bg-black text-white" />
        <span className="h-[3px] w-4 rounded-full bg-[#c894d8]" />
      </div>
    </div>
    <div className="ml-[11px] flex h-full w-6 shrink-0 flex-col items-center justify-end pb-[5px]">
      <svg viewBox="0 0 24 24" className="mb-1 size-6">
        <path d="M0 0h24v24H0z" fill="#c4082c" />
        <path d="M6 6h12v12l-3.500-3.500v-5h-5zM9 10.500v4.500h4.500L10.500 18H6v-4.500z" fill="#fff" />
      </svg>
      <span className="h-[3px] w-[6px] rounded-full bg-[#8494ac]" />
    </div>
    <div className="ml-[389px] flex flex-1 items-center">
      <svg viewBox="0 0 12 7" className="h-[7px] w-3 shrink-0" fill="none" stroke="#fff" strokeWidth="1.300">
        <path d="m.5 6.500 5.500-5 5.500 5" />
      </svg>
      <svg viewBox="0 0 16 16" className="ml-[10px] size-4 shrink-0">
        <circle cx="8" cy="8" r="8" fill="#3ca028" />
        <circle cx="7.500" cy="8" r="6.800" fill="#f0e828" />
        <path d="M8 3.500v9M3.500 8h9" stroke="#2c8c1c" strokeWidth="2.200" />
      </svg>
      <span className="ml-2 flex size-4 shrink-0 bg-[linear-gradient(90deg,transparent_18%,#ddd_18%,#ddd_82%,transparent_82%)] bg-[length:100%_75%] bg-no-repeat">
        <SiEpicgames className="size-4 text-[#0c0c0c]" />
      </span>
      <FaSteam className="ml-2 size-4 shrink-0 rounded-full bg-[#1c4c84] text-[#dceaf6]" />
      <Mic className="ml-[12px] size-4 shrink-0 text-[#c49ccc]" />
      <span className="ml-[18px] text-[13px] leading-none">中</span>
      <SogouLogo className="ml-[24px] size-[14px] shrink-0 rounded-[2px] text-[14px]" />
      <svg viewBox="0 0 17 16" className="ml-[23px] h-4 w-[17px] shrink-0" fill="none" stroke="#fff" strokeWidth="1.200">
        <path d="M10 1.500H1v11h12.500V8M7 12.500V15M3.500 15.200h8M11.500 1h4v4.500h-4zM13.500 5.500V15" />
      </svg>
      <Volume2 className="ml-[6px] size-4 shrink-0" strokeWidth={1.600} />
      <div className="ml-auto flex w-[100px] flex-col items-end gap-1 text-[12px] leading-[12px] tracking-[-0.350px]">
        <span>23:59</span>
        <span className="whitespace-nowrap">2023/1/17 星期二</span>
      </div>
      <span className="mr-5 ml-2 flex size-4 shrink-0 items-center justify-center rounded-full bg-[#d094dc] text-[11px] leading-none text-[#222]">6</span>
    </div>
  </div>
);

const Corner = ({ className }: IIcon) => (
  <svg viewBox="0 0 6 6" className={clsx('size-[6px]', className)} fill="#8a8c8a">
    <path d="M6 0v6H0z" />
  </svg>
);

export default function App() {
  return (
    <div className="relative flex h-[1080px] w-[1920px] flex-col overflow-hidden bg-[#151714] font-[Roboto,'Noto_Sans_CJK_SC',sans-serif] text-[#c0c2c0]">
      <div className="flex h-[58px] shrink-0">
        <div className="flex w-[65px] items-center pb-[5px] pl-[7px]">
          <UnrealLogo />
        </div>
        <div className="flex flex-1 flex-col justify-between">
          <Menu className="h-[23px] pl-[2px]" items={['文件', '编辑', '窗口', '工具', '构建', '选择', 'Actor', '帮助']} />
          <div className="flex h-[31px] w-[210px] items-center rounded-t-[4px] bg-[#222422] pl-2 text-[13px] leading-none text-white">
            <svg viewBox="0 0 16 13" className="mr-[9px] h-[13px] w-4">
              <path d="M0 10h16v3H0z" fill="#8a6428" />
              <path d="M3 10 4.500 3 6 6.500 8 0l1.800 6L11.500 4 13 10z" fill="#f09c1c" />
            </svg>
            未命名
          </div>
        </div>
        <div className="flex h-7 w-[112px] items-center justify-center rounded-b-[5px] bg-[#0d0e0c] pr-0.5 text-[13px] leading-none">脚步声</div>
        <div className="flex h-[34px] w-[136px] items-center pl-[26px]">
          <svg viewBox="0 0 100 12" className="h-3 w-[100px]" fill="none" stroke="#d8dad8" strokeWidth="1.200">
            <path d="M0 6.500h10M42.500 3h7v8.500h-7zM44.500 3V.8H52v8h-2.500M84 .5l10 11M94 .5 84 11.500" />
          </svg>
        </div>
      </div>
      <div className="flex h-3 shrink-0 items-end bg-[#222422]">
        <span className="ml-[17px] h-px w-[14px] bg-[#c8cac8]" />
        <span className="ml-[21px] h-3 w-[2px] bg-[#151714]" />
        <span className="ml-[14px] h-[6px] w-[110px] rounded-t-[3px] border border-b-0 border-[#363836] bg-[#0d0e0c]" />
        <span className="ml-[14px] h-3 w-[2px] bg-[#151714]" />
        <span className="ml-[21px] h-[2px] w-[7px] rounded-t-full bg-[#c8cac8]" />
        <span className="ml-[112px] h-[2px] w-[2px] bg-[#c8cac8]" />
        <span className="ml-[39px] h-3 w-[2px] bg-[#151714]" />
        <span className="ml-[13px] h-[6px] w-[119px] rounded-tl-[3px] bg-[#383a38]" />
        <span className="ml-px h-[6px] w-[22px] rounded-tr-[3px] bg-[#383a38]" />
        <span className="ml-[13px] h-3 w-[2px] bg-[#151714]" />
        <span className="ml-[20px] h-px w-4 bg-[#c8cac8]" />
      </div>
      <div className="flex-1" />
      <div className="flex h-[14px] shrink-0 overflow-hidden border-b-4 border-[#151714] bg-[#222422] pl-1 text-[13px] leading-none">
        <span className="ml-1 h-[6px] w-[236px] bg-[#2f312f]" />
        <span className="ml-[4px] w-[2px] bg-[#151714]" />
        <span className="-mt-[8px] ml-[10px] tracking-[-0.200px]">2 项(1 项被选中)</span>
        <span className="ml-auto w-[5px] bg-[#151714]" />
        <span className="mr-[7px] w-[441px] border-b border-[#191a19]" />
      </div>
      <div className="flex h-8 shrink-0 bg-[#222422] text-[13px] leading-none">
        <StatusLeft />
        <div className="ml-auto flex w-[114px] items-center border-l-2 border-[#151714] pl-[13px]">
          <svg viewBox="0 0 15 15" className="mr-[3px] size-[15px]" fill="#c8cac8">
            <path d="M0 0h15v4.200H0zM0 5.400h15v4.200H0zM0 10.800h15V15H0z" />
            <path d="M8 2h2M11.500 2h2M8 7.500h2M11.500 7.500h2M8 13h2M11.500 13h2" stroke="#222" strokeWidth="1.800" />
          </svg>
          派生数据
          <Corner className="mt-4 ml-3" />
        </div>
        <div className="w-3 border-x-2 border-[#151714]" />
        <div className="flex w-[183px] items-center pl-[12px]">
          <SaveIcon className="mr-[6px] !size-[15px]" />
          1未保存
          <Ban className="mr-[5px] ml-[17px] size-4" />
          源码管理
          <Corner className="mt-4" />
        </div>
        <div className="w-[3px] bg-[#151714]" />
      </div>
      <Taskbar />

      <EditorWindow />
      <Candidates />
      <ImeBar />
      <div className="absolute top-[938px] left-[1909px] h-[60px] w-[9px] rounded-full border border-[#8a8c8a] bg-[linear-gradient(#222_10%,#e0803c_12%,#e88c48_75%,#f0b880)]" />
    </div>
  );
}
